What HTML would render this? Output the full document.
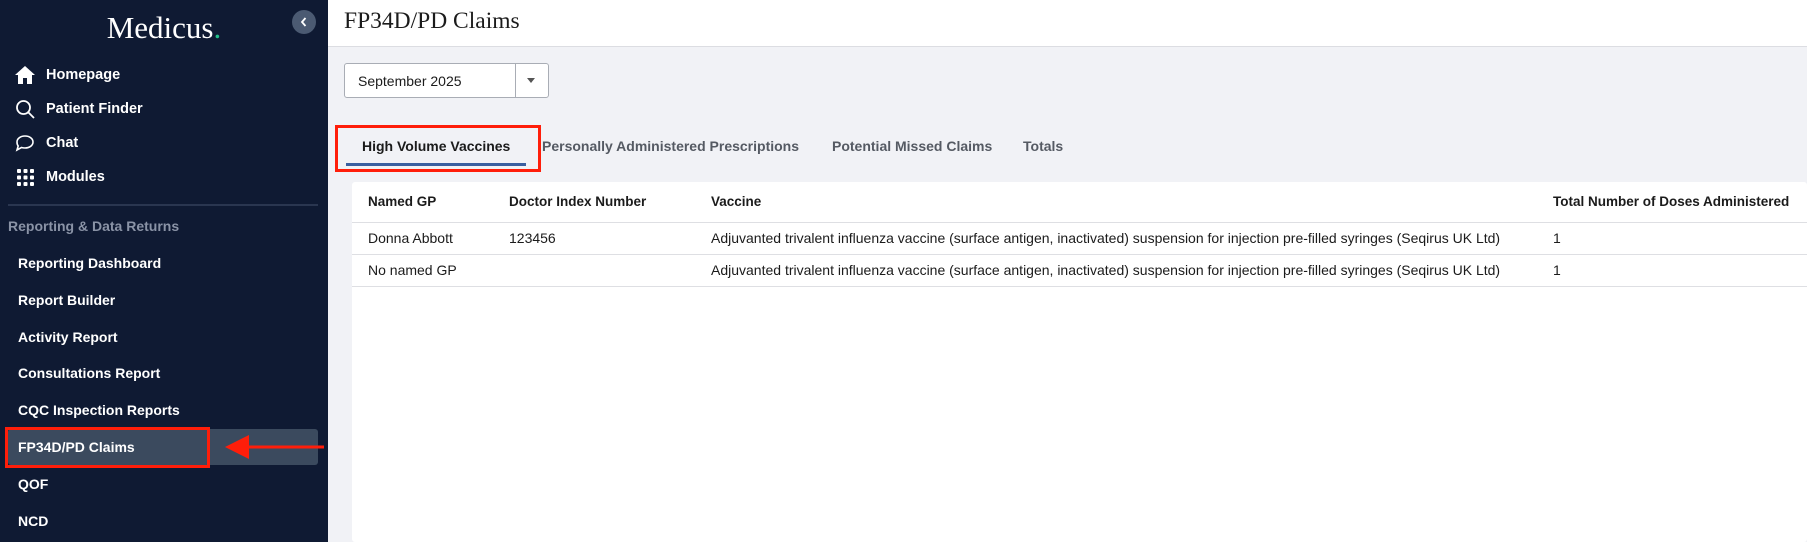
<!DOCTYPE html>
<html><head><style>
*{box-sizing:border-box;margin:0;padding:0}
body{width:1807px;height:542px;overflow:hidden;font-family:"Liberation Sans",Arial,sans-serif;background:#f1f2f6;position:relative}
.sb{position:absolute;left:0;top:0;width:328px;height:542px;background:#0f1a33;color:#fff}
.abs{position:absolute;white-space:nowrap}
.logo{left:0;width:328px;text-align:center;top:10px;font-family:"Liberation Serif",serif;font-size:31px;color:#fff}
.nav{font-size:14.5px;font-weight:bold;color:#fff;left:46px}
.sub{font-size:14px;font-weight:bold;color:#fff;left:18px}
.main{position:absolute;left:328px;top:0;right:0;height:47px;background:#fff;border-bottom:1px solid #dcdde2}
td,th{font-size:14px;text-align:left;padding:0;height:32px;border-bottom:1px solid #dedfe3;white-space:nowrap;color:#1b1b1b}
th{font-weight:bold;height:40px;font-size:13.5px}
.tab{top:138px;font-size:14px;font-weight:bold;color:#555a63}
</style></head><body>
<div class="sb">
<div class="abs logo">Medicus<span style="color:#22c08a">.</span></div>
<div class="abs" style="left:292px;top:10px;width:24px;height:24px;border-radius:12px;background:#4b5a72"><svg width="24" height="24"><path d="M13.5 8 L10 12 L13.5 16" stroke="#fff" stroke-width="1.8" fill="none"/></svg></div>
<svg class="abs" style="left:14px;top:65px" width="22" height="20"><path d="M11 1 L21 10 H18 V19 H13 V13 H9 V19 H4 V10 H1 Z" fill="#fff"/></svg>
<div class="abs nav" style="top:67px">Homepage</div>
<svg class="abs" style="left:15px;top:99px" width="20" height="20"><circle cx="8.5" cy="8.5" r="6.5" stroke="#fff" stroke-width="1.8" fill="none"/><path d="M13 13 L19 19" stroke="#fff" stroke-width="1.8"/></svg>
<div class="abs nav" style="top:101px">Patient Finder</div>
<svg class="abs" style="left:15px;top:134px" width="20" height="18"><path d="M10 2 C15 2 18 5 18 8 C18 11.5 14.5 14 10 14 C8.5 14 7.5 13.8 6.5 13.5 L2 16 L3.2 12 C2.3 11 2 9.5 2 8 C2 5 5 2 10 2 Z" stroke="#fff" stroke-width="1.6" fill="none"/></svg>
<div class="abs nav" style="top:135px">Chat</div>
<svg class="abs" style="left:17px;top:169px" width="17" height="17" fill="#fff"><rect x="0" y="0" width="4" height="4" rx="1"/><rect x="6.5" y="0" width="4" height="4" rx="1"/><rect x="13" y="0" width="4" height="4" rx="1"/><rect x="0" y="6.5" width="4" height="4" rx="1"/><rect x="6.5" y="6.5" width="4" height="4" rx="1"/><rect x="13" y="6.5" width="4" height="4" rx="1"/><rect x="0" y="13" width="4" height="4" rx="1"/><rect x="6.5" y="13" width="4" height="4" rx="1"/><rect x="13" y="13" width="4" height="4" rx="1"/></svg>
<div class="abs nav" style="top:169px">Modules</div>
<div class="abs" style="left:8px;top:204px;width:310px;height:2px;background:#2a3650"></div>
<div class="abs" style="left:8px;top:218px;font-size:14px;font-weight:bold;color:#8a93a6">Reporting &amp; Data Returns</div>
<div class="abs sub" style="top:255px">Reporting Dashboard</div>
<div class="abs sub" style="top:292px">Report Builder</div>
<div class="abs sub" style="top:329px">Activity Report</div>
<div class="abs sub" style="top:365px">Consultations Report</div>
<div class="abs sub" style="top:402px">CQC Inspection Reports</div>
<div class="abs" style="left:8px;top:429px;width:310px;height:36px;background:#3b4a5e;border-radius:3px"></div>
<div class="abs sub" style="top:439px">FP34D/PD Claims</div>
<div class="abs" style="left:5px;top:427px;width:205px;height:41px;border:3px solid #ff1e0a"></div>
<svg class="abs" style="left:222px;top:434px" width="102" height="26"><path d="M26 13 H102" stroke="#ff1e0a" stroke-width="3"/><path d="M3 13 L27 1 V25 Z" fill="#ff1e0a"/></svg>
<div class="abs sub" style="top:476px">QOF</div>
<div class="abs sub" style="top:513px">NCD</div>
</div>
<div class="main"><div class="abs" style="left:16px;top:8px;font-family:'Liberation Serif',serif;font-size:23.5px;color:#1b1b1b">FP34D/PD Claims</div></div>
<div class="abs" style="left:344px;top:63px;width:205px;height:35px;background:#fff;border:1px solid #a9adb5;border-radius:3px">
<div class="abs" style="left:13px;top:9px;font-size:14px;color:#1b1b1b">September 2025</div>
<div class="abs" style="left:170px;top:0;width:1px;height:33px;background:#a9adb5"></div>
<svg class="abs" style="left:181px;top:13px" width="10" height="8"><path d="M1 1 H9 L5 6 Z" fill="#555"/></svg>
</div>
<div class="abs tab" style="left:362px;color:#1b1b1b">High Volume Vaccines</div>
<div class="abs" style="left:346px;top:163px;width:180px;height:3px;background:#3a5fa0"></div>
<div class="abs" style="left:335px;top:125px;width:206px;height:47px;border:3px solid #ff1e0a"></div>
<div class="abs tab" style="left:542px">Personally Administered Prescriptions</div>
<div class="abs tab" style="left:832px">Potential Missed Claims</div>
<div class="abs tab" style="left:1023px">Totals</div>
<div class="abs" style="left:352px;top:182px;width:1455px;height:360px;background:#fff;border-radius:3px">
<table style="border-collapse:collapse;width:1455px">
<tr><th style="padding-left:16px;width:157px">Named GP</th><th style="width:202px">Doctor Index Number</th><th style="width:842px">Vaccine</th><th>Total Number of Doses Administered</th></tr>
<tr><td style="padding-left:16px">Donna Abbott</td><td>123456</td><td>Adjuvanted trivalent influenza vaccine (surface antigen, inactivated) suspension for injection pre-filled syringes (Seqirus UK Ltd)</td><td>1</td></tr>
<tr><td style="padding-left:16px">No named GP</td><td></td><td>Adjuvanted trivalent influenza vaccine (surface antigen, inactivated) suspension for injection pre-filled syringes (Seqirus UK Ltd)</td><td>1</td></tr>
</table></div>
</body></html>
